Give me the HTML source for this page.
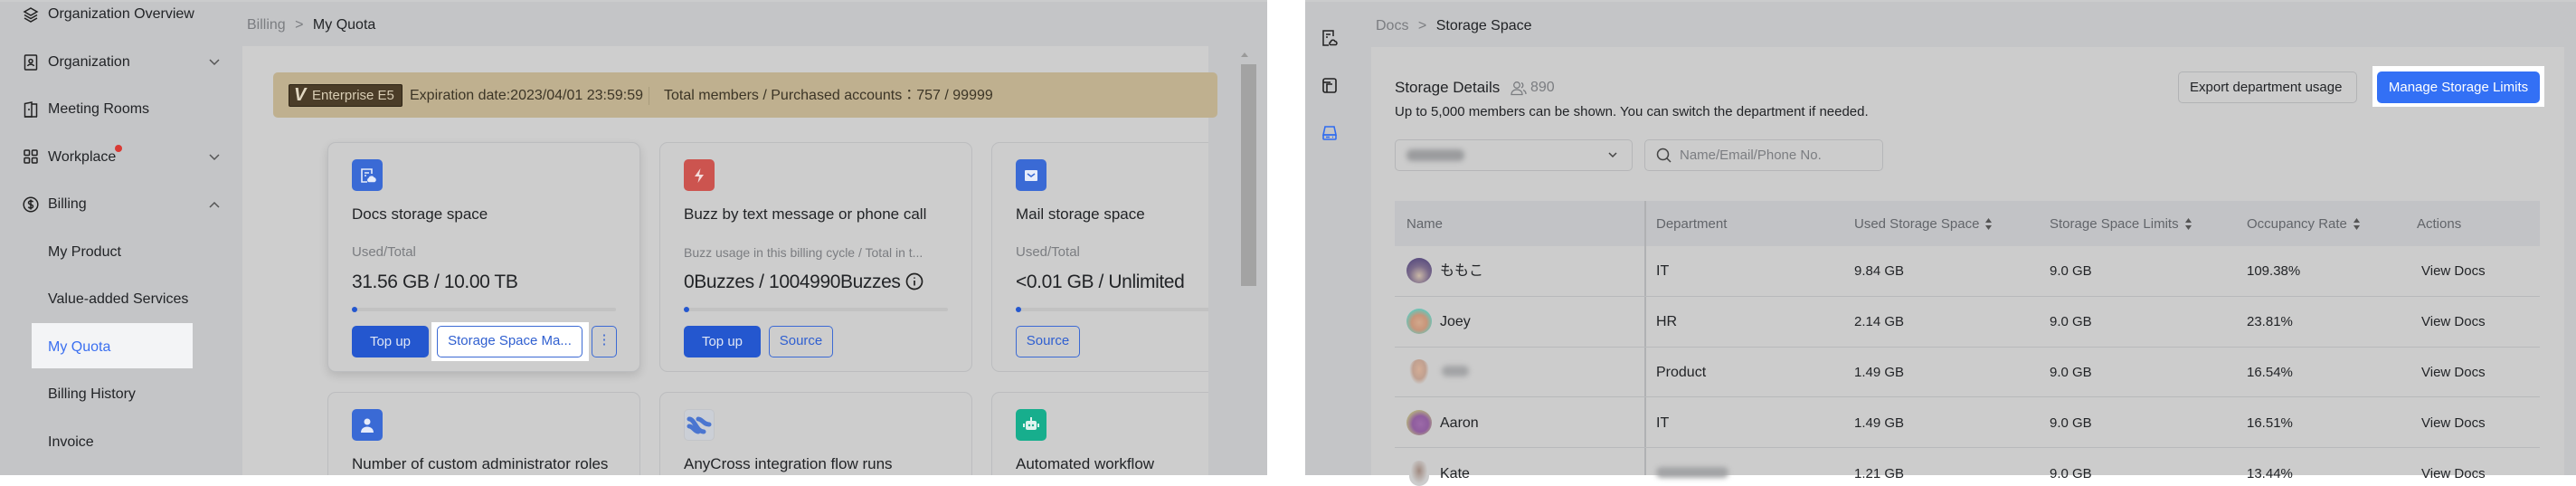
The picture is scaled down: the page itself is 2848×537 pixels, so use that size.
<!DOCTYPE html>
<html><head><meta charset="utf-8"><style>
*{margin:0;padding:0;box-sizing:border-box}
body{width:2848px;height:525px;overflow:hidden;background:#fff;font-family:"Liberation Sans","Noto Sans CJK JP",sans-serif;color:#222427;position:relative}
.a{position:absolute;white-space:nowrap}
.t15{font-size:15px;line-height:18px}
.t16{font-size:16px;line-height:20px}
.card{position:absolute;width:346px;height:254px;border:1px solid #bcbdbf;border-radius:9px;background:#cdcdcd}
.ic{position:absolute;left:26px;top:18px;width:34px;height:35px;border-radius:5px}
.btnb{position:absolute;height:35px;border-radius:5px;background:#2457cf;color:#dfe6f5;font-size:15px;line-height:35px;text-align:center}
.btno{position:absolute;height:35px;border-radius:5px;border:1.5px solid #3c6ad4;color:#2f5fd0;font-size:15px;line-height:32px;text-align:center}
.bar{position:absolute;left:26px;top:182px;height:4px;border-radius:2px;background:#c2c2c2}
.bar:before{content:"";position:absolute;left:0;top:-1px;width:6px;height:6px;border-radius:3px;background:#2457cf}
.gray{color:#7b7d81}
.val{position:absolute;left:26px;top:140px;font-size:21px;line-height:28px;letter-spacing:-0.4px;white-space:nowrap}
.row{position:absolute;left:1542px;width:1266px;height:1px;background:#b8b9bb}
.av{position:absolute;width:28px;height:28px;border-radius:14px}
</style></head><body>
<div class="a" style="left:0;top:0;width:1401px;height:525px;background:#c4c5c7"></div>
<div class="a" style="left:0;top:0;width:1401px;height:2px;background:#cbcccd"></div>
<svg class="a" style="left:25px;top:7px" width="18" height="18" viewBox="0 0 18 18" fill="none" stroke="#222" stroke-width="1.5"><path d="M9 2l7 4-7 4-7-4z"/><path d="M2 9.5l7 4 7-4"/><path d="M2 13l7 4 7-4"/></svg>
<div class="a t16" style="left:53px;top:6px">Organization Overview</div>
<svg class="a" style="left:26px;top:60px" width="16" height="18" viewBox="0 0 16 18" fill="none" stroke="#222" stroke-width="1.5"><rect x="1.5" y="1" width="13" height="16" rx="1"/><circle cx="8" cy="7.5" r="2"/><path d="M4.5 13c1-2.5 6-2.5 7 0"/></svg>
<div class="a t16" style="left:53px;top:59px">Organization</div>
<svg class="a" style="left:230px;top:63px" width="14" height="10" viewBox="0 0 14 10" fill="none" stroke="#555" stroke-width="1.5"><path d="M2 3l5 5 5-5"/></svg>
<svg class="a" style="left:26px;top:112px" width="16" height="18" viewBox="0 0 16 18" fill="none" stroke="#222" stroke-width="1.5"><path d="M1.5 17V2.5L9 1v16z"/><path d="M9 3h5.5v14"/><path d="M1 17h14"/><path d="M6 8v2"/></svg>
<div class="a t16" style="left:53px;top:111px">Meeting Rooms</div>
<svg class="a" style="left:26px;top:165px" width="16" height="16" viewBox="0 0 16 16" fill="none" stroke="#222" stroke-width="1.5"><rect x="1" y="1" width="5.5" height="5.5" rx="1"/><rect x="9.5" y="1" width="5.5" height="5.5" rx="1"/><rect x="1" y="9.5" width="5.5" height="5.5" rx="1"/><rect x="9.5" y="9.5" width="5.5" height="5.5" rx="1"/></svg>
<div class="a t16" style="left:53px;top:164px">Workplace</div>
<div class="a" style="left:127px;top:160px;width:8px;height:8px;border-radius:4px;background:#d93a34"></div>
<svg class="a" style="left:230px;top:168px" width="14" height="10" viewBox="0 0 14 10" fill="none" stroke="#555" stroke-width="1.5"><path d="M2 3l5 5 5-5"/></svg>
<svg class="a" style="left:25px;top:217px" width="18" height="18" viewBox="0 0 18 18" fill="none" stroke="#222" stroke-width="1.5"><circle cx="9" cy="9" r="7.8"/><path d="M11.5 6.3c-.5-.9-1.5-1.3-2.5-1.3-1.5 0-2.5.8-2.5 2 0 2.6 5 1.4 5 4 0 1.2-1 2-2.5 2-1.1 0-2.1-.5-2.6-1.4M9 3.5v11"/></svg>
<div class="a t16" style="left:53px;top:216px">Billing</div>
<svg class="a" style="left:230px;top:221px" width="14" height="10" viewBox="0 0 14 10" fill="none" stroke="#555" stroke-width="1.5"><path d="M2 8l5-5 5 5"/></svg>
<div class="a t16" style="left:53px;top:269px">My Product</div>
<div class="a t16" style="left:53px;top:321px">Value-added Services</div>
<div class="a" style="left:35px;top:357px;width:178px;height:50px;background:#f3f4f6"></div>
<div class="a t16" style="left:53px;top:374px;color:#3a6ff0">My Quota</div>
<div class="a t16" style="left:53px;top:426px">Billing History</div>
<div class="a t16" style="left:53px;top:479px">Invoice</div>
<div class="a t16" style="left:273px;top:18px"><span class="gray">Billing</span> <span class="gray" style="margin:0 6px">&gt;</span> My Quota</div>
<div class="a" style="left:268px;top:51px;width:1068px;height:474px;background:#cecece;overflow:hidden">
  <div class="card" style="left:94px;top:106px;box-shadow:0 4px 10px rgba(0,0,0,.12)">
    <div class="ic" style="background:#3a6ad5"></div>
    <svg class="a" style="left:35px;top:27px" width="18" height="18" viewBox="0 0 18 18" fill="none" stroke="#e6ecfa" stroke-width="1.6"><path d="M13 7V2H2v14h6"/><path d="M5 6h5M5 9h2"/><path d="M10 15.5h6a2 2 0 0 0-1-3.7 2.5 2.5 0 0 0-4.8.6A1.6 1.6 0 0 0 10 15.5z" fill="#e6ecfa"/></svg>
    <div class="a" style="left:26px;top:68px;font-size:17px;line-height:22px">Docs storage space</div>
    <div class="a t15 gray" style="left:26px;top:112px">Used/Total</div>
    <div class="val">31.56 GB / 10.00 TB</div>
    <div class="bar" style="width:292px"></div>
    <div class="btnb" style="left:26px;top:202px;width:85px">Top up</div>
    <div class="a" style="left:114px;top:198px;width:174px;height:43px;background:#fff"></div>
    <div class="btno" style="left:120px;top:202px;width:161px;background:#fff">Storage Space Ma...</div>
    <div class="btno" style="left:291px;top:202px;width:28px;line-height:30px">&#8942;</div>
  </div>
  <div class="card" style="left:461px;top:106px">
    <div class="ic" style="background:#cc544f"></div>
    <svg class="a" style="left:36px;top:27px" width="14" height="18" viewBox="0 0 14 18"><path d="M8.5 1L2 10h5l-1.5 7L12 8H7z" fill="#f3dcdb"/></svg>
    <div class="a" style="left:26px;top:68px;font-size:17px;line-height:22px">Buzz by text message or phone call</div>
    <div class="a t15 gray" style="left:26px;top:112px;font-size:14px">Buzz usage in this billing cycle / Total in t...</div>
    <div class="val">0Buzzes / 1004990Buzzes <svg style="vertical-align:-3px" width="20" height="20" viewBox="0 0 20 20" fill="none" stroke="#222" stroke-width="1.7"><circle cx="10" cy="10" r="8.5"/><path d="M10 9v5.5M10 5.5v1.2"/></svg></div>
    <div class="bar" style="width:292px"></div>
    <div class="btnb" style="left:26px;top:202px;width:85px">Top up</div>
    <div class="btno" style="left:120px;top:202px;width:71px">Source</div>
  </div>
  <div class="card" style="left:828px;top:106px">
    <div class="ic" style="background:#3a6ad5"></div>
    <svg class="a" style="left:34px;top:28px" width="18" height="16" viewBox="0 0 18 16"><rect x="2" y="2" width="14" height="12" rx="1" fill="#e6ecfa"/><path d="M5 6l4 3 4-3" fill="none" stroke="#3a6ad5" stroke-width="1.5"/></svg>
    <div class="a" style="left:26px;top:68px;font-size:17px;line-height:22px">Mail storage space</div>
    <div class="a t15 gray" style="left:26px;top:112px">Used/Total</div>
    <div class="val">&lt;0.01 GB / Unlimited</div>
    <div class="bar" style="width:292px"></div>
    <div class="btno" style="left:26px;top:202px;width:71px">Source</div>
  </div>
  <div class="card" style="left:94px;top:382px">
    <div class="ic" style="background:#3a6ad5"></div>
    <svg class="a" style="left:35px;top:27px" width="16" height="18" viewBox="0 0 16 18" fill="#e6ecfa"><circle cx="8" cy="5" r="3.5"/><path d="M1 17c0-4 3-6.5 7-6.5s7 2.5 7 6.5z"/></svg>
    <div class="a" style="left:26px;top:68px;font-size:17px;line-height:22px">Number of custom administrator roles</div>
  </div>
  <div class="card" style="left:461px;top:382px">
    <div class="ic" style="background:#cbcfd6;border:1px solid #c2c4c8"></div>
    <svg class="a" style="left:28px;top:24px" width="30" height="24" viewBox="0 0 30 24" fill="none" stroke="#4a75d0" stroke-width="5" stroke-linecap="round"><path d="M4 5c6 0 8 14 16 14"/><path d="M4 13c4 0 6 6 10 6M14 5c4 0 6 6 12 6"/></svg>
    <div class="a" style="left:26px;top:68px;font-size:17px;line-height:22px">AnyCross integration flow runs</div>
  </div>
  <div class="card" style="left:828px;top:382px">
    <div class="ic" style="background:#17ae8d"></div>
    <svg class="a" style="left:33px;top:26px" width="20" height="18" viewBox="0 0 20 18" fill="#dff3ee"><rect x="4" y="5" width="12" height="10" rx="2"/><rect x="9" y="1" width="2" height="4"/><rect x="1" y="8" width="2" height="4"/><rect x="17" y="8" width="2" height="4"/><circle cx="8" cy="10" r="1.2" fill="#17ae8d"/><circle cx="12" cy="10" r="1.2" fill="#17ae8d"/></svg>
    <div class="a" style="left:26px;top:68px;font-size:17px;line-height:22px">Automated workflow</div>
  </div>
</div>
<div class="a" style="left:302px;top:80px;width:1044px;height:50px;border-radius:5px;background:#bfb08f"></div>
<div class="a" style="left:319px;top:93px;width:126px;height:25px;border-radius:2px;background:#4b3d28;border:1px solid #2f2516"></div>
<div class="a" style="left:325px;top:94px;font-size:20px;line-height:23px;font-style:italic;font-weight:bold;color:#e2d8c2">V</div>
<div class="a" style="left:345px;top:97px;font-size:15px;line-height:18px;color:#d8cdb4">Enterprise E5</div>
<div class="a t16" style="left:453px;top:96px;color:#3c3526">Expiration date:2023/04/01 23:59:59</div>
<div class="a" style="left:717px;top:96px;width:1px;height:20px;background:#a89c7c"></div>
<div class="a t16" style="left:734px;top:96px;color:#3c3526">Total members / Purchased accounts：757 / 99999</div>
<div class="a" style="left:1367px;top:58px;width:0;height:0;border-left:4px solid transparent;border-right:4px solid transparent;border-bottom:5px solid #9a9a9a;margin-left:5px"></div>
<div class="a" style="left:1372px;top:71px;width:17px;height:245px;background:#a3a3a3"></div>

<div class="a" style="left:1443px;top:0;width:1405px;height:525px;background:#c4c5c7"></div>
<div class="a" style="left:1443px;top:0;width:1405px;height:2px;background:#cbcccd"></div>
<svg class="a" style="left:1461px;top:32px" width="18" height="20" viewBox="0 0 18 20" fill="none" stroke="#222" stroke-width="1.5"><path d="M13 8V2H2v16h6"/><path d="M5 6h5M5 9h2"/><path d="M10 17.5h6a2 2 0 0 0-1-3.7 2.5 2.5 0 0 0-4.8.6A1.6 1.6 0 0 0 10 17.5z"/></svg>
<svg class="a" style="left:1461px;top:85px" width="18" height="19" viewBox="0 0 18 19" fill="none" stroke="#222" stroke-width="1.6"><rect x="2" y="2" width="14" height="15" rx="2"/><path d="M6 17V8h6"/><path d="M2 6h8"/></svg>
<svg class="a" style="left:1461px;top:138px" width="18" height="18" viewBox="0 0 18 18" fill="none" stroke="#2f6cf0" stroke-width="1.6"><path d="M4 2h10l2 9H2z"/><rect x="2" y="11" width="14" height="5" rx="1"/><path d="M5 13.5h4M12 13.5h1"/></svg>
<div class="a t16" style="left:1521px;top:19px"><span class="gray">Docs</span> <span class="gray" style="margin:0 6px">&gt;</span> Storage Space</div>
<div class="a" style="left:1516px;top:52px;width:1319px;height:473px;background:#cccccc"></div>
<div class="a" style="left:1542px;top:86px;font-size:17px;line-height:22px">Storage Details</div>
<svg class="a" style="left:1670px;top:89px" width="18" height="17" viewBox="0 0 18 17" fill="none" stroke="#7b7d81" stroke-width="1.3"><circle cx="7" cy="5" r="3.3"/><path d="M1 15.5c0-3.5 2.6-5.5 6-5.5s6 2 6 5.5z"/><path d="M12 2.5a3 3 0 0 1 0 5.5M14 10.5c2 .8 3 2.3 3 4.5"/></svg>
<div class="a t16 gray" style="left:1692px;top:87px">890</div>
<div class="a t15" style="left:1542px;top:115px">Up to 5,000 members can be shown. You can switch the department if needed.</div>
<div class="a" style="left:1542px;top:154px;width:263px;height:35px;border:1px solid #b5b6b8;border-radius:5px;background:#cccccc"></div>
<div class="a" style="left:1555px;top:165px;width:64px;height:13px;border-radius:6px;background:#9a9b9d;filter:blur(3px)"></div>
<svg class="a" style="left:1777px;top:166px" width="12" height="10" viewBox="0 0 12 10" fill="none" stroke="#444" stroke-width="1.5"><path d="M2 3l4 4 4-4"/></svg>
<div class="a" style="left:1818px;top:154px;width:264px;height:35px;border:1px solid #b5b6b8;border-radius:5px;background:#cccccc"></div>
<svg class="a" style="left:1831px;top:163px" width="17" height="17" viewBox="0 0 17 17" fill="none" stroke="#444" stroke-width="1.5"><circle cx="7.5" cy="7.5" r="6"/><path d="M12 12l4 4"/></svg>
<div class="a t15 gray" style="left:1857px;top:163px">Name/Email/Phone No.</div>
<div class="a" style="left:2408px;top:79px;width:198px;height:35px;border:1px solid #b2b3b5;border-radius:5px"></div>
<div class="a t15" style="left:2421px;top:88px">Export department usage</div>
<div class="a" style="left:2623px;top:73px;width:190px;height:45px;background:#fff"></div>
<div class="a" style="left:2628px;top:79px;width:180px;height:35px;border-radius:5px;background:#3370f5;color:#fff;font-size:15px;line-height:35px;text-align:center">Manage Storage Limits</div>
<div class="a" style="left:1542px;top:222px;width:1266px;height:50px;background:#c2c3c6"></div>
<div class="a" style="left:1818px;top:222px;width:2px;height:303px;background:#b0b1b3"></div>
<div class="a t15" style="left:1555px;top:239px;color:#62656a">Name</div>
<div class="a t15" style="left:1831px;top:239px;color:#62656a">Department</div>
<div class="a t15" style="left:2050px;top:239px;color:#62656a">Used Storage Space</div>
<div class="a t15" style="left:2266px;top:239px;color:#62656a">Storage Space Limits</div>
<div class="a t15" style="left:2484px;top:239px;color:#62656a">Occupancy Rate</div>
<div class="a t15" style="left:2672px;top:239px;color:#62656a">Actions</div>
<svg class="a" style="left:2194px;top:240px" width="9" height="15" viewBox="0 0 9 15" fill="#555"><path d="M4.5 1L8 6H1zM4.5 14L1 9h7z"/></svg>
<svg class="a" style="left:2415px;top:240px" width="9" height="15" viewBox="0 0 9 15" fill="#555"><path d="M4.5 1L8 6H1zM4.5 14L1 9h7z"/></svg>
<svg class="a" style="left:2601px;top:240px" width="9" height="15" viewBox="0 0 9 15" fill="#555"><path d="M4.5 1L8 6H1zM4.5 14L1 9h7z"/></svg>
<div class="row" style="top:327px"></div><div class="row" style="top:383px"></div><div class="row" style="top:438px"></div><div class="row" style="top:494px"></div>
<div class="av" style="left:1555px;top:285px;background:radial-gradient(circle at 50% 70%,#c9b7a6 0,#7a6a8a 45%,#4a3f7a 100%)"></div>
<div class="a t16" style="left:1592px;top:290px">ももこ</div>
<div class="a t16" style="left:1831px;top:290px">IT</div>
<div class="a t15" style="left:2050px;top:291px">9.84 GB</div><div class="a t15" style="left:2266px;top:291px">9.0 GB</div><div class="a t15" style="left:2484px;top:291px">109.38%</div><div class="a t15" style="left:2677px;top:291px">View Docs</div>
<div class="av" style="left:1555px;top:341px;background:radial-gradient(circle at 50% 55%,#d2a88c 0,#c8957a 40%,#6fc2b5 70%)"></div>
<div class="a t16" style="left:1592px;top:346px">Joey</div>
<div class="a t16" style="left:1831px;top:346px">HR</div>
<div class="a t15" style="left:2050px;top:347px">2.14 GB</div><div class="a t15" style="left:2266px;top:347px">9.0 GB</div><div class="a t15" style="left:2484px;top:347px">23.81%</div><div class="a t15" style="left:2677px;top:347px">View Docs</div>
<div class="av" style="left:1558px;top:397px;width:22px;background:radial-gradient(ellipse at 50% 40%,#d4ad96 0,#c0a090 45%,#cccccc 70%)"></div>
<div class="a" style="left:1594px;top:404px;width:30px;height:12px;border-radius:6px;background:#a2a3a5;filter:blur(3px)"></div>
<div class="a t16" style="left:1831px;top:402px">Product</div>
<div class="a t15" style="left:2050px;top:403px">1.49 GB</div><div class="a t15" style="left:2266px;top:403px">9.0 GB</div><div class="a t15" style="left:2484px;top:403px">16.54%</div><div class="a t15" style="left:2677px;top:403px">View Docs</div>
<div class="av" style="left:1555px;top:453px;background:radial-gradient(circle at 55% 55%,#9c6aa8 0,#8f5d9e 40%,#b1a982 70%)"></div>
<div class="a t16" style="left:1592px;top:458px">Aaron</div>
<div class="a t16" style="left:1831px;top:458px">IT</div>
<div class="a t15" style="left:2050px;top:459px">1.49 GB</div><div class="a t15" style="left:2266px;top:459px">9.0 GB</div><div class="a t15" style="left:2484px;top:459px">16.51%</div><div class="a t15" style="left:2677px;top:459px">View Docs</div>
<div class="av" style="left:1558px;top:509px;width:22px;background:radial-gradient(ellipse at 50% 40%,#a08a80 0,#cccccc 60%)"></div>
<div class="a t16" style="left:1592px;top:514px">Kate</div>
<div class="a" style="left:1831px;top:516px;width:80px;height:12px;border-radius:6px;background:#a2a3a5;filter:blur(3px)"></div>
<div class="a t15" style="left:2050px;top:515px">1.21 GB</div><div class="a t15" style="left:2266px;top:515px">9.0 GB</div><div class="a t15" style="left:2484px;top:515px">13.44%</div><div class="a t15" style="left:2677px;top:515px">View Docs</div>
</body></html>
